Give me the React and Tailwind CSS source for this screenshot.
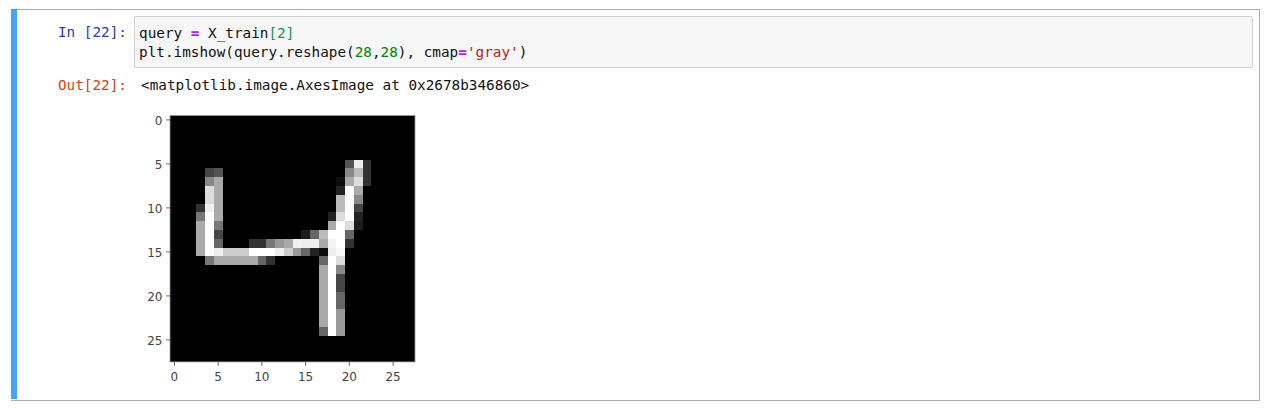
const W = 8.75, H = 8.8, X0 = 31, Y0 = 7.5;

// row -> { column: grey level }
const CELLS = {
  5: { 20: 0x55, 21: 0xee, 22: 0x33 },
  6: { 4: 0x44, 5: 0x55, 20: 0x88, 21: 0xbb, 22: 0x33 },
  7: { 4: 0x88, 5: 0xaa, 19: 0x0a, 20: 0xaa, 21: 0xdd, 22: 0x33 },
  8: { 4: 0xdd, 5: 0xaa, 19: 0x22, 20: 0xff, 21: 0xaa },
  9: { 4: 0xdd, 5: 0xaa, 19: 0xbb, 20: 0xff, 21: 0x88 },
  10: { 3: 0x33, 4: 0xf0, 5: 0xaa, 19: 0xbb, 20: 0xff, 21: 0x44 },
  11: { 3: 0x77, 4: 0xff, 5: 0xaa, 18: 0x22, 19: 0xdd, 20: 0xff, 21: 0x22 },
  12: { 3: 0xaa, 4: 0xff, 5: 0x77, 18: 0xaa, 19: 0xff, 20: 0xdd, 21: 0x1a },
  13: { 3: 0xaa, 4: 0xff, 5: 0x44, 15: 0x1a, 16: 0x66, 17: 0xbb, 18: 0xff, 19: 0xff, 20: 0x66 },
  14: { 3: 0xaa, 4: 0xff, 5: 0x66, 9: 0x33, 10: 0x33, 11: 0x77, 12: 0x99, 13: 0xaa, 14: 0xf0, 15: 0xee, 16: 0xee, 17: 0xaa, 18: 0xf4, 19: 0xff, 20: 0x33 },
  15: { 3: 0xaa, 4: 0xff, 5: 0xee, 6: 0xcc, 7: 0xcc, 8: 0xcc, 9: 0xff, 10: 0xff, 11: 0xff, 12: 0xee, 13: 0xcc, 14: 0x99, 15: 0x66, 16: 0x22, 17: 0x0a, 18: 0xee, 19: 0xf8 },
  16: { 4: 0x77, 5: 0xaa, 6: 0xaa, 7: 0xaa, 8: 0xaa, 9: 0xaa, 10: 0x66, 11: 0x33, 17: 0x66, 18: 0xff, 19: 0xdd },
  17: { 17: 0xaa, 18: 0xff, 19: 0x88 },
  18: { 17: 0xaa, 18: 0xff, 19: 0x44 },
  19: { 17: 0xaa, 18: 0xff, 19: 0x44 },
  20: { 17: 0xaa, 18: 0xff, 19: 0x66 },
  21: { 17: 0xaa, 18: 0xff, 19: 0x66 },
  22: { 17: 0xaa, 18: 0xff, 19: 0x99 },
  23: { 17: 0xaa, 18: 0xff, 19: 0x99 },
  24: { 17: 0x66, 18: 0xff, 19: 0x99 },
};

const TICKS = [0, 5, 10, 15, 20, 25];

function Plot() {
  const bottom = Y0 + 28 * H;
  return (
    <svg width="280" height="276" viewBox="0 0 280 276" className="block">
      <defs>
        <filter id="soft" x="0" y="0" width="1" height="1">
          <feGaussianBlur stdDeviation="0.6" />
        </filter>
      </defs>
      <rect x={X0} y={Y0} width={28 * W} height={28 * H} fill="#000" />
      <g filter="url(#soft)" shapeRendering="crispEdges">
        <rect x={X0} y={Y0} width={28 * W} height={28 * H} fill="#000" />
        {Object.entries(CELLS).flatMap(([r, row]) =>
          Object.entries(row).map(([c, v]) => {
            const x1 = Math.round(X0 + Number(c) * W);
            const x2 = Math.round(X0 + (Number(c) + 1) * W);
            const y1 = Math.round(Y0 + Number(r) * H);
            const y2 = Math.round(Y0 + (Number(r) + 1) * H);
            return (
              <rect
                key={r + "-" + c}
                x={x1}
                y={y1}
                width={x2 - x1}
                height={y2 - y1}
                fill={`rgb(${v},${v},${v})`}
              />
            );
          })
        )}
      </g>
      <rect x={X0} y={Y0} width={28 * W} height={28 * H} fill="none" stroke="#999" strokeWidth="0.8" />
      {TICKS.map((t) => {
        const x = X0 + (t + 0.5) * W;
        const y = Y0 + (t + 0.5) * H;
        return (
          <g key={t} fill="#444" fontSize="12" style={{ fontFamily: '"DejaVu Sans", sans-serif' }}>
            <line x1={x} x2={x} y1={bottom} y2={bottom + 4} stroke="#555" strokeWidth="0.9" />
            <line x1={X0 - 4} x2={X0} y1={y} y2={y} stroke="#555" strokeWidth="0.9" />
            <text x={x} y={bottom + 19} textAnchor="middle">{t}</text>
            <text x={X0 - 7.5} y={y + 5.5} textAnchor="end">{t}</text>
          </g>
        );
      })}
    </svg>
  );
}

const mono = "font-['DejaVu_Sans_Mono',monospace] text-[14.33px] leading-[19px] whitespace-pre";

export default function App() {
  return (
    <div className="min-h-[414px] bg-white pt-[9px] pl-[11px]">
      <div className="w-[1249px] h-[392px] border border-[#ababab] border-l-0 flex flex-col">
        <div className="flex flex-col h-full border-l-[6px] border-[#42a5f5] -mt-px -mb-px pt-[7px]">
          <div className="flex">
            <div className={`${mono} w-[110px] text-right pt-[7px] text-[#303f9f]`}>In [22]:</div>
            <div className={`${mono} ml-[7px] w-[1119px] h-[52px] border border-[#cfcfcf] rounded-[2px] bg-[#f7f7f7] pl-[4px] pt-[7px] text-[#111]`}>
              <div>
                query <span className="font-bold text-[#aa22ff]">=</span> X_train<span className="text-[#0a9a4a]">[2]</span>
              </div>
              <div>
                plt.imshow(query.reshape(<span className="text-[#008800]">28</span>,<span className="text-[#008800]">28</span>), cmap<span className="font-bold text-[#aa22ff]">=</span><span className="text-[#ba2121]">'gray'</span>)
              </div>
            </div>
          </div>
          <div className="flex mt-[8px]">
            <div className={`${mono} w-[110px] text-right text-[#d84315]`}>Out[22]:</div>
            <div className="ml-[14px] flex flex-col">
              <div className={`${mono} text-[#111]`}>&lt;matplotlib.image.AxesImage at 0x2678b346860&gt;</div>
              <div className="-ml-[2px] mt-[13px]">
                <Plot />
              </div>
            </div>
          </div>
        </div>
      </div>
    </div>
  );
}
